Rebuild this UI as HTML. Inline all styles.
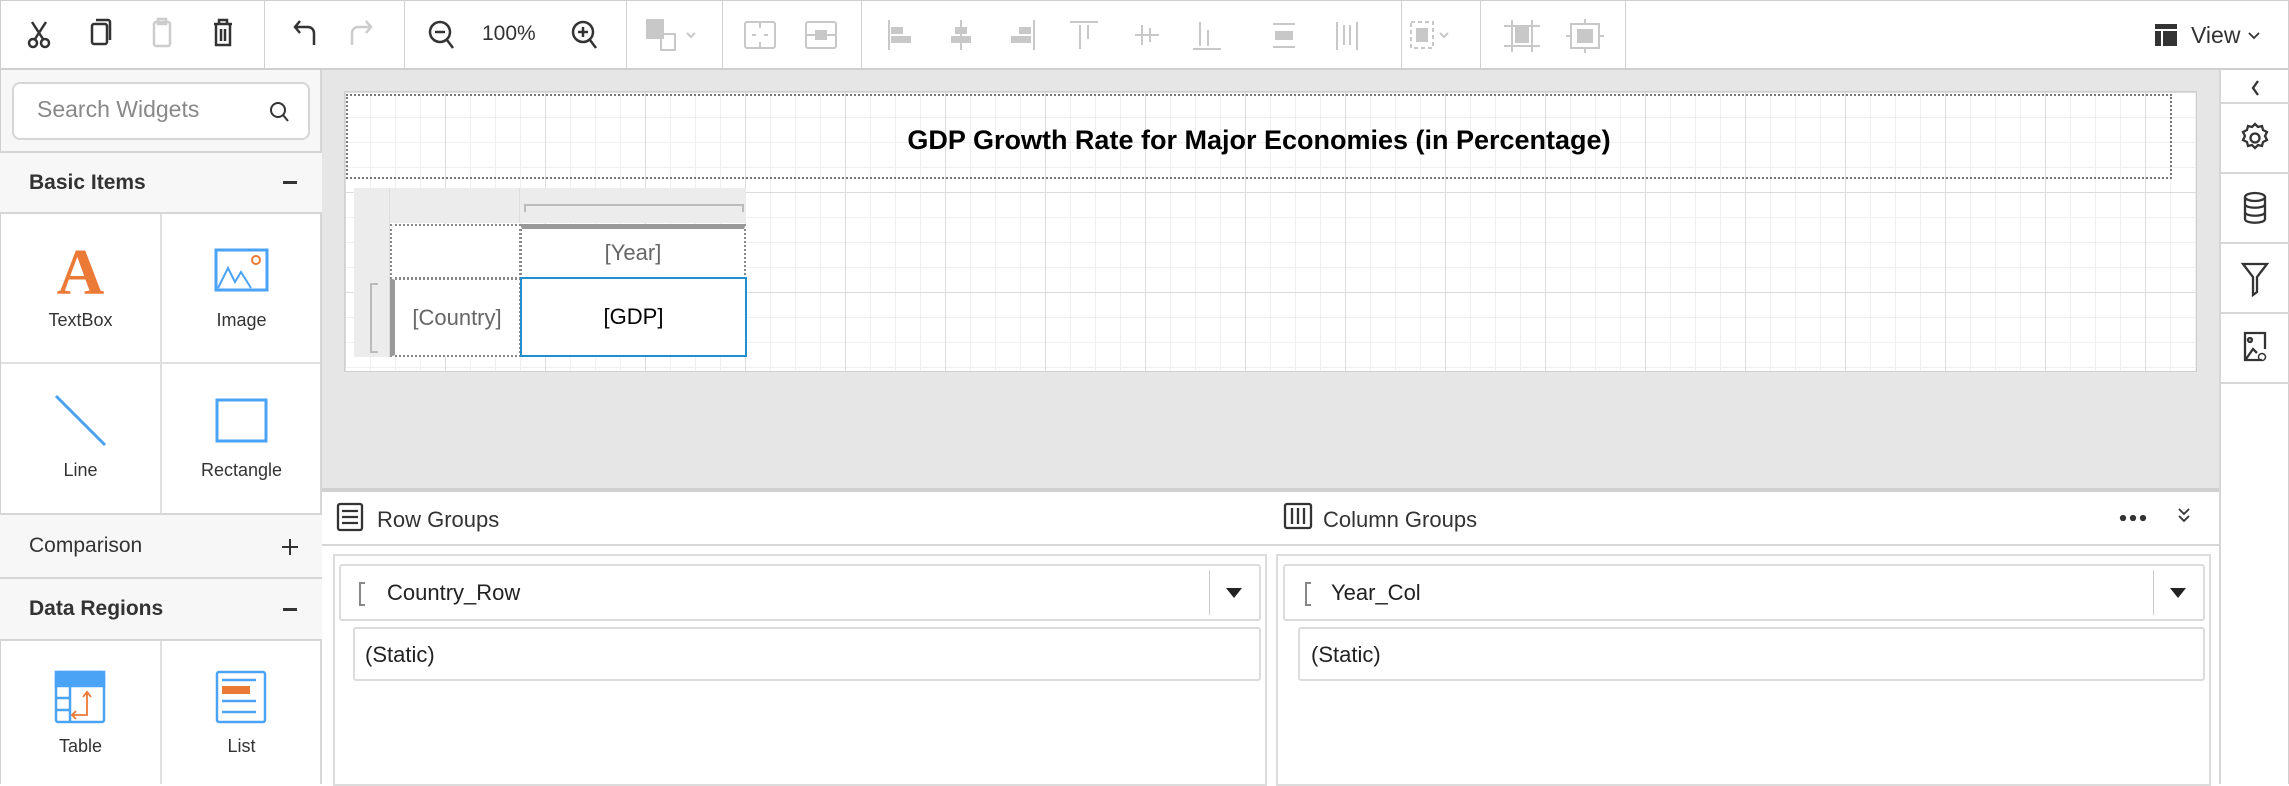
<!DOCTYPE html>
<html><head><meta charset="utf-8"><style>
*{box-sizing:border-box;margin:0;padding:0}
body{width:2289px;height:784px;overflow:hidden;background:#fff;font-family:"Liberation Sans",sans-serif;color:#333;position:relative}
.a{position:absolute}
.sep{position:absolute;top:0;width:1px;height:69px;background:#d0d0d0}
svg{position:absolute;overflow:visible}
.lbl{position:absolute;font-size:18px;color:#333;text-align:center;width:161px}
.hd{position:absolute;left:0;width:322px;background:#f7f7f7;border-top:2px solid #d6d6d6;border-bottom:2px solid #d6d6d6;font-size:21px;font-weight:bold;color:#333;padding-left:29px}
</style></head><body>
<!-- toolbar -->
<div class="a" style="left:0;top:0;width:2289px;height:70px;border:1px solid #cfcfcf;border-bottom:2px solid #cfcfcf;background:#fff"></div>
<div class="sep" style="left:264px"></div><div class="sep" style="left:404px"></div><div class="sep" style="left:626px"></div><div class="sep" style="left:722px"></div><div class="sep" style="left:861px"></div><div class="sep" style="left:1401px"></div><div class="sep" style="left:1480px"></div><div class="sep" style="left:1625px"></div>
<svg style="left:0;top:0" width="2289" height="70" fill="none" stroke="#333" stroke-width="2.5">
<circle cx="33" cy="43" r="4"/><circle cx="45" cy="43" r="4"/><path d="M35 39L46 22M43 39L32 22"/>
<rect x="92" y="24" width="15" height="20" rx="2"/><path d="M96 20h12a2 2 0 0 1 2 2v18"/>
<rect x="154" y="22" width="16" height="24" rx="2" stroke="#ccc"/><rect x="158" y="19" width="8" height="5" stroke="#ccc"/>
<path d="M214 24h18M219 24v-4h8v4M216 24v21h14v-21M221 29v12M225 29v12"/>
<path d="M296 27h12a6 6 0 0 1 6 6v12M300 21l-5 6 5 6"/>
<path stroke="#ccc" d="M370 27h-12a6 6 0 0 0-6 6v12M366 21l5 6-5 6"/>
<circle cx="440" cy="32" r="10"/><path d="M447 40l6 8M435 32h10"/>
<circle cx="583" cy="32" r="10"/><path d="M590 40l6 8M578 32h10M583 27v10"/>
<g stroke="#c8c8c8" stroke-width="2">
<rect x="647" y="20" width="16" height="18" fill="#c8c8c8"/><rect x="661" y="34" width="14" height="16"/><path d="M687 33l4 4 4-4"/>
<rect x="745" y="22" width="30" height="26" rx="2"/><path d="M760 22v6M760 42v6M752 35h4M764 35h4"/>
<rect x="806" y="22" width="30" height="26" rx="2"/><path d="M806 35h10M826 35h10"/><rect x="816" y="31" width="10" height="8" fill="#c8c8c8"/>
<path d="M889 20v30"/><rect x="892" y="28" width="10" height="5" fill="#c8c8c8"/><rect x="892" y="37" width="18" height="5" fill="#c8c8c8"/>
<path d="M961 20v30"/><rect x="956" y="28" width="10" height="5" fill="#c8c8c8"/><rect x="952" y="37" width="18" height="5" fill="#c8c8c8"/>
<path d="M1034 20v30"/><rect x="1020" y="28" width="10" height="5" fill="#c8c8c8"/><rect x="1012" y="37" width="18" height="5" fill="#c8c8c8"/>
<path d="M1070 22h28M1080 25v24M1088 25v14"/>
<path d="M1135 35h24M1142 25v20M1150 28v14"/>
<path d="M1193 49h28M1200 22v24M1208 30v16"/>
<path d="M1273 24h22M1273 47h22"/><rect x="1276" y="32" width="16" height="7" fill="#c8c8c8"/>
<path d="M1337 22v28M1357 22v28M1344 25v20M1350 25v20"/>
<rect x="1411" y="22" width="22" height="26" stroke-dasharray="4 3"/><rect x="1417" y="29" width="10" height="12" fill="#c8c8c8"/><path d="M1440 33l4 4 4-4"/>
<path d="M1512 20v32M1532 20v32M1504 26h36M1504 46h36"/><rect x="1516" y="28" width="12" height="14" fill="#c8c8c8"/>
<rect x="1571" y="24" width="28" height="24"/><rect x="1578" y="30" width="14" height="12" fill="#c8c8c8"/><path d="M1566 36h4M1600 36h4M1585 19v4M1585 49v4"/>
</g>
<rect x="2155" y="24" width="22" height="5" fill="#333" stroke="none"/><rect x="2155" y="31" width="6" height="15" fill="#333" stroke="none"/><rect x="2163" y="31" width="14" height="15" fill="#333" stroke="none"/>
<path stroke-width="1.8" d="M2249 33l5 5 5-5"/>
</svg>
<div class="a" style="left:482px;top:22px;font-size:21px;color:#333">100%</div>
<div class="a" style="left:2191px;top:22px;font-size:23px;color:#333">View</div>

<!-- left panel -->
<div class="a" style="left:0;top:70px;width:322px;height:714px;background:#f7f7f7;border-left:1px solid #d0d0d0;border-right:2px solid #d6d6d6"></div>
<div class="a" style="left:12px;top:82px;width:298px;height:58px;border:2px solid #d6d6d6;border-radius:8px;background:#fff"></div>
<div class="a" style="left:37px;top:96px;font-size:23px;color:#888">Search Widgets</div>
<svg style="left:0;top:0" width="322" height="784" fill="none" stroke="#333" stroke-width="2"><circle cx="278" cy="110" r="7"/><path d="M283 115l5 6"/></svg>
<div class="hd" style="top:151px;height:63px;line-height:59px">Basic Items</div>
<div class="a" style="left:283px;top:181px;width:14px;height:3px;background:#333"></div>
<div class="a" style="left:1px;top:214px;width:319px;height:299px;background:#fff"></div>
<div class="a" style="left:160px;top:214px;width:2px;height:299px;background:#e0e0e0"></div>
<div class="a" style="left:1px;top:362px;width:319px;height:2px;background:#e0e0e0"></div>
<div class="a" style="left:0;top:240px;width:161px;text-align:center;font-family:'Liberation Serif',serif;font-size:66px;font-weight:bold;color:#ec7a37;line-height:1">A</div>
<svg style="left:0;top:0" width="322" height="784" fill="none" stroke-width="3">
<rect x="216" y="250" width="51" height="40" stroke="#4aa3f5"/><path d="M218 288l10-20 7 14 6-10 10 16" stroke="#4aa3f5" stroke-width="2"/><circle cx="256" cy="260" r="4" stroke="#ec7a37" stroke-width="2"/>
<path d="M56 396L105 445" stroke="#4aa3f5"/>
<rect x="217" y="400" width="49" height="41" stroke="#4aa3f5"/>
</svg>
<div class="lbl" style="left:0;top:310px">TextBox</div><div class="lbl" style="left:161px;top:310px">Image</div>
<div class="lbl" style="left:0;top:460px">Line</div><div class="lbl" style="left:161px;top:460px">Rectangle</div>
<div class="hd" style="top:513px;height:66px;line-height:62px;font-weight:normal">Comparison</div>
<div class="a" style="left:282px;top:546px;width:16px;height:2px;background:#333"></div><div class="a" style="left:289px;top:539px;width:2px;height:16px;background:#333"></div>
<div class="hd" style="top:577px;height:64px;line-height:60px">Data Regions</div>
<div class="a" style="left:283px;top:608px;width:14px;height:3px;background:#333"></div>
<div class="a" style="left:1px;top:641px;width:319px;height:143px;background:#fff"></div>
<div class="a" style="left:160px;top:641px;width:2px;height:143px;background:#e0e0e0"></div>
<svg style="left:0;top:0" width="322" height="784" fill="none" stroke-width="2.5">
<rect x="56" y="672" width="48" height="50" rx="2" stroke="#4aa3f5"/><rect x="56" y="672" width="48" height="14" fill="#4aa3f5" stroke="#4aa3f5"/><path d="M56 698h14M56 710h14M70 686v36" stroke="#4aa3f5"/><path d="M87 693v22h-14M83 697l4-5 4 5M76 711l-4 4 4 4" stroke="#ec7a37" stroke-width="1.8"/>
<rect x="217" y="672" width="48" height="50" rx="2" stroke="#4aa3f5"/><path d="M222 680h34M222 701h34M222 712h34" stroke="#4aa3f5"/><rect x="222" y="686" width="28" height="8" fill="#ec7a37" stroke="none"/>
</svg>
<div class="lbl" style="left:0;top:736px">Table</div><div class="lbl" style="left:161px;top:736px">List</div>

<!-- design area -->
<div class="a" style="left:322px;top:70px;width:1897px;height:420px;background:#e6e6e6"></div>
<div class="a" style="left:344px;top:91px;width:1853px;height:281px;border:1px solid #cfcfcf;background-color:#fff;
background-image:linear-gradient(90deg,#dcdcdc 1px,transparent 1px),linear-gradient(180deg,#dcdcdc 1px,transparent 1px),linear-gradient(90deg,#efefef 1px,transparent 1px),linear-gradient(180deg,#efefef 1px,transparent 1px);
background-size:100px 100px,100px 100px,25px 25px,25px 25px;background-position:0 0"></div>
<div class="a" style="left:346px;top:94px;width:1826px;height:85px;border:2px dotted #777"></div>
<div class="a" style="left:346px;top:125px;width:1826px;text-align:center;font-size:27px;font-weight:bold;color:#000">GDP Growth Rate for Major Economies (in Percentage)</div>
<!-- tablix -->
<div class="a" style="left:354px;top:188px;width:392px;height:35px;background:#ececec"></div>
<div class="a" style="left:354px;top:188px;width:36px;height:169px;background:#ececec;border-right:1px solid #ddd"></div>
<div class="a" style="left:390px;top:188px;width:130px;height:35px;border-right:1px solid #ddd"></div>
<div class="a" style="left:524px;top:204px;width:220px;height:8px;border:2px solid #bbb;border-bottom:none"></div>
<div class="a" style="left:370px;top:283px;width:8px;height:70px;border:2px solid #bbb;border-right:none"></div>
<div class="a" style="left:390px;top:224px;width:131px;height:55px;background:#fff;border:2px dotted #888"></div>
<div class="a" style="left:520px;top:224px;width:226px;height:55px;background:#fff;border:2px dotted #888;border-top:5px solid #999;text-align:center;line-height:48px;font-size:22px;color:#666">[Year]</div>
<div class="a" style="left:390px;top:278px;width:131px;height:79px;background:#fff;border:2px dotted #888;border-left:5px solid #999;text-align:center;line-height:75px;font-size:22px;color:#666">[Country]</div>
<div class="a" style="left:520px;top:277px;width:227px;height:80px;background:#fff;border:2px solid #1f8fd0;text-align:center;line-height:76px;font-size:22px;color:#000">[GDP]</div>

<!-- right sidebar -->
<div class="a" style="left:2219px;top:70px;width:70px;height:714px;background:#fff;border-left:2px solid #d6d6d6;border-right:1px solid #d0d0d0"></div>
<div class="a" style="left:2219px;top:102px;width:70px;height:2px;background:#d6d6d6"></div>
<div class="a" style="left:2219px;top:172px;width:70px;height:2px;background:#d6d6d6"></div>
<div class="a" style="left:2219px;top:242px;width:70px;height:2px;background:#d6d6d6"></div>
<div class="a" style="left:2219px;top:312px;width:70px;height:2px;background:#d6d6d6"></div>
<div class="a" style="left:2219px;top:382px;width:70px;height:2px;background:#d6d6d6"></div>
<svg style="left:0;top:0" width="2289" height="784" fill="none" stroke="#333" stroke-width="2.3">
<path d="M2258 81l-5 7 5 7"/>
<circle cx="2255" cy="138" r="4.5"/><path d="M2255 124l3 3 4-1 1 4 4 2-2 4 2 4-4 2-1 4-4-1-3 3-3-3-4 1-1-4-4-2 2-4-2-4 4-2 1-4 4 1z"/>
<ellipse cx="2255" cy="197" rx="10" ry="4"/><path d="M2245 197v22c0 5 20 5 20 0v-22M2245 204c0 5 20 5 20 0M2245 212c0 5 20 5 20 0"/>
<path d="M2243 264h24l-10 13v15l-4 3v-18z"/>
<path d="M2262 360h-17v-27h20v16"/><circle cx="2250" cy="340" r="2"/><path d="M2246 359l7-10 4 4"/><circle cx="2262" cy="357" r="3.5" stroke-width="1.5"/>
</svg>

<!-- bottom panel -->
<div class="a" style="left:322px;top:488px;width:1897px;height:4px;background:#d0d0d0"></div>
<div class="a" style="left:322px;top:492px;width:1897px;height:292px;background:#fff"></div>
<div class="a" style="left:322px;top:544px;width:1897px;height:2px;background:#d6d6d6"></div>
<svg style="left:0;top:0" width="2289" height="784" fill="none" stroke="#333" stroke-width="2.3">
<rect x="338" y="504" width="24" height="26" rx="2"/><path d="M342 511h16M342 517h16M342 523h16"/>
<rect x="1285" y="504" width="26" height="24" rx="2"/><path d="M1292 508v16M1298 508v16M1304 508v16"/>
<circle cx="2123" cy="518" r="2" fill="#333"/><circle cx="2133" cy="518" r="2" fill="#333"/><circle cx="2143" cy="518" r="2" fill="#333"/>
<path d="M2179 509l5 5 5-5M2179 516l5 5 5-5" stroke-width="1.8"/>
</svg>
<div class="a" style="left:377px;top:507px;font-size:22px;color:#333">Row Groups</div>
<div class="a" style="left:1323px;top:507px;font-size:22px;color:#333">Column Groups</div>
<div class="a" style="left:333px;top:554px;width:934px;height:232px;border:2px solid #dcdcdc"></div>
<div class="a" style="left:1276px;top:554px;width:935px;height:232px;border:2px solid #dcdcdc"></div>
<div class="a" style="left:339px;top:564px;width:922px;height:57px;border:2px solid #dcdcdc;border-radius:3px"></div>
<div class="a" style="left:1209px;top:570px;width:1px;height:45px;background:#ccc"></div>
<div class="a" style="left:1283px;top:564px;width:922px;height:57px;border:2px solid #dcdcdc;border-radius:3px"></div>
<div class="a" style="left:2153px;top:570px;width:1px;height:45px;background:#ccc"></div>
<svg style="left:0;top:0" width="2289" height="784" fill="none" stroke="#888" stroke-width="2">
<path d="M365 583h-5v22h5M1311 583h-5v22h5"/>
<path d="M1226 588h16l-8 10z M2170 588h16l-8 10z" fill="#222" stroke="none"/>
</svg>
<div class="a" style="left:387px;top:580px;font-size:22px;color:#222">Country_Row</div>
<div class="a" style="left:1331px;top:580px;font-size:22px;color:#222">Year_Col</div>
<div class="a" style="left:353px;top:627px;width:908px;height:54px;border:2px solid #dcdcdc;border-radius:3px"></div>
<div class="a" style="left:1298px;top:627px;width:907px;height:54px;border:2px solid #dcdcdc;border-radius:3px"></div>
<div class="a" style="left:365px;top:642px;font-size:22px;color:#222">(Static)</div>
<div class="a" style="left:1311px;top:642px;font-size:22px;color:#222">(Static)</div>
</body></html>
